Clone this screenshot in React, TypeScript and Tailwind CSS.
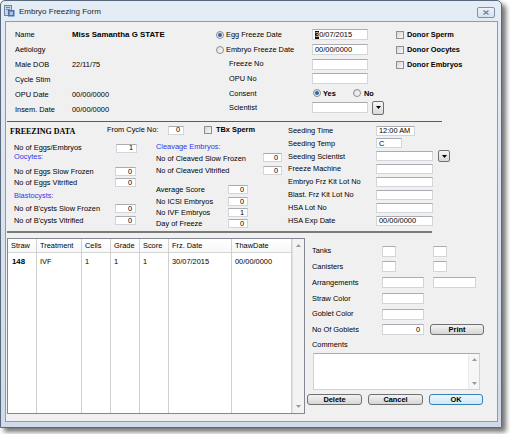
import React from "react";

type BoxProps = { className?: string; children?: React.ReactNode; right?: boolean };
function Box({ className = "", children, right = false }: BoxProps) {
  return (
    <div
      className={`bg-white border border-[#d3d5d9] border-t-[#a9acb2] flex items-center shrink-0 overflow-hidden whitespace-nowrap ${
        right ? "justify-end pr-[3px]" : "pl-[2px]"
      } ${className}`}
    >
      {children}
    </div>
  );
}

function Radio({ on = false, className = "" }: { on?: boolean; className?: string }) {
  return (
    <div
      className={`w-[8px] h-[8px] rounded-full border border-[#8c8c8c] bg-gradient-to-br from-[#dedede] to-[#fbfbfb] flex items-center justify-center shrink-0 ${className}`}
    >
      {on && <div className="w-[4px] h-[4px] rounded-full bg-[#2c66b8]" />}
    </div>
  );
}

function Check({ className = "" }: { className?: string }) {
  return (
    <div
      className={`w-[8px] h-[8px] border border-[#8e8f8f] bg-gradient-to-br from-[#d6d6d6] to-[#f8f8f8] shrink-0 ${className}`}
    />
  );
}

function DropBtn({ className = "" }: { className?: string }) {
  return (
    <div
      className={`w-[12px] rounded-[2px] border border-[#707070] bg-gradient-to-b from-[#f6f6f6] to-[#d9d9d9] flex items-center justify-center shrink-0 ${className}`}
    >
      <svg width="5" height="3" viewBox="0 0 5 3">
        <polygon points="0,0 5,0 2.5,3" fill="#000" />
      </svg>
    </div>
  );
}

function Btn({ children, className = "", def = false }: { children: React.ReactNode; className?: string; def?: boolean }) {
  return (
    <div
      className={`rounded-[3px] border flex items-center justify-center font-bold shrink-0 ${
        def
          ? "border-[#3c7fb1] bg-gradient-to-b from-[#eaf6fd] to-[#cfe8f7]"
          : "border-[#707070] bg-gradient-to-b from-[#f3f3f3] to-[#d6d6d6]"
      } ${className}`}
    >
      {children}
    </div>
  );
}

function Arrow({ up }: { up?: boolean }) {
  return (
    <svg width="5" height="3" viewBox="0 0 5 3">
      <polygon points={up ? "0,3 5,3 2.5,0" : "0,0 5,0 2.5,3"} fill="#9a9a9a" />
    </svg>
  );
}

const cols = [
  { h: "Straw", w: "w-[29px]", v: "148", b: true },
  { h: "Treatment", w: "w-[45px]", v: "IVF" },
  { h: "Cells", w: "w-[29px]", v: "1" },
  { h: "Grade", w: "w-[29px]", v: "1" },
  { h: "Score", w: "w-[29px]", v: "1" },
  { h: "Frz. Date", w: "w-[63px]", v: "30/07/2015" },
  { h: "ThawDate", w: "w-[60px]", v: "00/00/0000" },
];

export default function App() {
  return (
    <div className="w-[510px] h-[434px] bg-white font-['Liberation_Sans',Arial,sans-serif] text-[7.4px] leading-none text-black overflow-hidden">
      <div className="w-[502px] h-[428px] rounded-t-[5px] border border-[#59687a] bg-gradient-to-b from-[#e4ecf6] to-[#cfdbea] shadow-[4px_4px_5px_rgba(0,0,0,0.55)] flex flex-col">
        {/* title bar */}
        <div className="h-[20px] flex items-center shrink-0 relative">
          <svg className="ml-[3px]" width="11" height="12" viewBox="0 0 11 12">
            <rect x="0.5" y="0.5" width="7" height="10" fill="#c9d4e2" stroke="#6f83a0" />
            <rect x="2" y="2" width="4" height="1" fill="#6f83a0" />
            <rect x="2" y="4" width="4" height="1" fill="#6f83a0" />
            <rect x="4" y="5" width="6.5" height="6.5" fill="#4a6fa5" />
            <rect x="5.5" y="6.5" width="3.5" height="3.5" fill="#a9c1e0" />
          </svg>
          <span className="ml-[4px] text-[8px] text-[#22272e] mt-[1px]">Embryo Freezing Form</span>
          <div className="ml-auto mr-[6px] mt-[2px] w-[18px] h-[11px] rounded-[2px] border border-[#7f91a8] bg-gradient-to-b from-[#eef3f9] to-[#d6e0ec] flex items-center justify-center">
            <svg width="6" height="5" viewBox="0 0 6 5">
              <path d="M0.5 0.5 L5.5 4.5 M5.5 0.5 L0.5 4.5" stroke="#6b7a8e" strokeWidth="1.2" />
            </svg>
          </div>
        </div>

        {/* client */}
        <div className="ml-[4px] w-[493px] h-[401px] border border-[#8d9cb1] bg-[#f0f0f0] flex flex-col">
          {/* top section */}
          <div className="h-[99px] flex pl-[9px] shrink-0">
            <div className="w-[201px] pt-[5px] flex flex-col">
              <div className="h-[15px] flex items-center">
                <span className="w-[57px]">Name</span>
                <span className="font-bold text-[7.9px]">Miss Samantha G STATE</span>
              </div>
              <div className="h-[15px] flex items-center">
                <span className="w-[57px]">Aetiology</span>
              </div>
              <div className="h-[15px] flex items-center">
                <span className="w-[57px]">Male DOB</span>
                <span>22/11/75</span>
              </div>
              <div className="h-[15px] flex items-center">
                <span className="w-[57px]">Cycle Stim</span>
              </div>
              <div className="h-[15px] flex items-center">
                <span className="w-[57px]">OPU Date</span>
                <span>00/00/0000</span>
              </div>
              <div className="h-[15px] flex items-center">
                <span className="w-[57px]">Insem. Date</span>
                <span>00/00/0000</span>
              </div>
            </div>

            <div className="w-[180px] pt-[5.7px] flex flex-col">
              <div className="h-[14.6px] flex items-center">
                <div className="w-[96px] flex items-center">
                  <Radio on />
                  <span className="ml-[2px]">Egg Freeze Date</span>
                </div>
                <Box className="w-[56px] h-[11px]">
                  <span className="bg-[#111] text-white">3</span>0/07/2015
                </Box>
              </div>
              <div className="h-[14.6px] flex items-center">
                <div className="w-[96px] flex items-center">
                  <Radio />
                  <span className="ml-[2px]">Embryo Freeze Date</span>
                </div>
                <Box className="w-[56px] h-[11px]">00/00/0000</Box>
              </div>
              <div className="h-[14.6px] flex items-center">
                <span className="w-[96px] pl-[13px]">Freeze No</span>
                <Box className="w-[56px] h-[11px]" />
              </div>
              <div className="h-[14.6px] flex items-center">
                <span className="w-[96px] pl-[13px]">OPU No</span>
                <Box className="w-[56px] h-[11px]" />
              </div>
              <div className="h-[14.6px] flex items-center">
                <span className="w-[96px] pl-[13px]">Consent</span>
                <Radio on className="ml-[1px]" />
                <span className="ml-[2px] w-[30px] font-bold">Yes</span>
                <Radio />
                <span className="ml-[3px] font-bold">No</span>
              </div>
              <div className="h-[14.6px] flex items-center">
                <span className="w-[96px] pl-[13px]">Scientist</span>
                <Box className="w-[56px] h-[11px]" />
                <DropBtn className="ml-[4px] h-[14px]" />
              </div>
            </div>

            <div className="pt-[5.5px] flex flex-col">
              <div className="h-[15px] flex items-center">
                <Check />
                <span className="ml-[3px] font-bold">Donor Sperm</span>
              </div>
              <div className="h-[15px] flex items-center">
                <Check />
                <span className="ml-[3px] font-bold">Donor Oocytes</span>
              </div>
              <div className="h-[15px] flex items-center">
                <Check />
                <span className="ml-[3px] font-bold">Donor Embryos</span>
              </div>
            </div>
          </div>

          <div className="h-[1px] ml-[1px] w-[435px] bg-[#5e5e5e] shrink-0" />

          {/* freezing section */}
          <div className="h-[109px] flex shrink-0">
            <div className="w-[282px] pl-[4px] flex flex-col">
              <div className="mt-[1px] h-[14px] flex items-center">
                <span className="w-[97px] font-['Liberation_Serif',serif] font-bold text-[8px] mt-[3px]">FREEZING DATA</span>
                <span className="w-[61px]">From Cycle No:</span>
                <Box right className="w-[16px] h-[9px]">0</Box>
                <Check className="ml-[20px]" />
                <span className="ml-[4px] font-bold">TBx Sperm</span>
              </div>
              <div className="flex">
                <div className="w-[146px] pl-[4px] flex flex-col">
                  <div className="mt-[6.5px] h-[9px] flex items-center">
                    <span className="w-[102px]">No of Eggs/Embryos</span>
                    <Box right className="w-[21px] h-[9px]">1</Box>
                  </div>
                  <div className="h-[9px] flex items-center text-[#3434e8]">Oocytes:</div>
                  <div className="mt-[5.5px] h-[9px] flex items-center">
                    <span className="w-[101px]">No of Eggs Slow Frozen</span>
                    <Box right className="w-[21px] h-[9px]">0</Box>
                  </div>
                  <div className="mt-[2px] h-[9px] flex items-center">
                    <span className="w-[101px]">No of Eggs Vitrified</span>
                    <Box right className="w-[21px] h-[9px]">0</Box>
                  </div>
                  <div className="mt-[4.5px] h-[9px] flex items-center text-[#3434e8]">Blastocysts:</div>
                  <div className="mt-[3.5px] h-[9px] flex items-center">
                    <span className="w-[101px]">No of B'cysts Slow Frozen</span>
                    <Box right className="w-[21px] h-[9px]">0</Box>
                  </div>
                  <div className="mt-[3px] h-[9px] flex items-center">
                    <span className="w-[101px]">No of B'cysts Vitrified</span>
                    <Box right className="w-[21px] h-[9px]">0</Box>
                  </div>
                </div>
                <div className="flex flex-col">
                  <div className="mt-[5.5px] h-[9px] flex items-center text-[#3434e8]">Cleavage Embryos:</div>
                  <div className="mt-[1.5px] h-[9px] flex items-center">
                    <span className="w-[107px] mt-[2px]">No of Cleaved Slow Frozen</span>
                    <Box right className="w-[19px] h-[9px]">0</Box>
                  </div>
                  <div className="mt-[4px] h-[9px] flex items-center">
                    <span className="w-[107px] mt-[1px]">No of Cleaved Vitrified</span>
                    <Box right className="w-[19px] h-[9px]">0</Box>
                  </div>
                  <div className="mt-[10px] h-[9px] flex items-center">
                    <span className="w-[72px]">Average Score</span>
                    <Box right className="w-[20px] h-[9px]">0</Box>
                  </div>
                  <div className="mt-[3px] h-[9px] flex items-center">
                    <span className="w-[72px]">No ICSI Embryos</span>
                    <Box right className="w-[20px] h-[9px]">0</Box>
                  </div>
                  <div className="mt-[2px] h-[9px] flex items-center">
                    <span className="w-[72px]">No IVF Embryos</span>
                    <Box right className="w-[20px] h-[9px]">1</Box>
                  </div>
                  <div className="mt-[2px] h-[9px] flex items-center">
                    <span className="w-[72px]">Day of Freeze</span>
                    <Box right className="w-[20px] h-[9px]">0</Box>
                  </div>
                </div>
              </div>
            </div>

            <div className="pt-[4px] flex flex-col gap-[3.9px]">
              <div className="h-[9px] flex items-center">
                <span className="w-[88px]">Seeding Time</span>
                <Box className="w-[39px] h-[10px]">12:00 AM</Box>
              </div>
              <div className="h-[9px] flex items-center">
                <span className="w-[88px]">Seeding Temp</span>
                <Box className="w-[26px] h-[10px]">C</Box>
              </div>
              <div className="h-[9px] flex items-center">
                <span className="w-[88px]">Seeding Scientist</span>
                <Box className="w-[57px] h-[10px]" />
                <DropBtn className="ml-[5px] h-[12px]" />
              </div>
              <div className="h-[9px] flex items-center">
                <span className="w-[88px]">Freeze Machine</span>
                <Box className="w-[57px] h-[10px]" />
              </div>
              <div className="h-[9px] flex items-center">
                <span className="w-[88px]">Embryo Frz Kit Lot No</span>
                <Box className="w-[57px] h-[10px]" />
              </div>
              <div className="h-[9px] flex items-center">
                <span className="w-[88px]">Blast. Frz Kit Lot No</span>
                <Box className="w-[57px] h-[10px]" />
              </div>
              <div className="h-[9px] flex items-center">
                <span className="w-[88px]">HSA Lot No</span>
                <Box className="w-[57px] h-[10px]" />
              </div>
              <div className="h-[9px] flex items-center">
                <span className="w-[88px]">HSA Exp Date</span>
                <Box className="w-[57px] h-[10px]">00/00/0000</Box>
              </div>
            </div>
          </div>

          <div className="h-[2px] ml-[1px] w-[425px] bg-[#7a7a7a] shrink-0" />

          {/* bottom section */}
          <div className="flex flex-1">
            <div className="ml-[1px] mt-[5px] w-[298px] h-[176px] border border-[#828790] bg-white flex">
              <div className="flex">
                {cols.map((c) => (
                  <div key={c.h} className={`${c.w} flex flex-col border-r border-[#d0d0d0]`}>
                    <div className="h-[14px] border-b border-[#d5d5d5] flex items-center pl-[3px] bg-gradient-to-b from-white to-[#f7f8fa]">
                      {c.h}
                    </div>
                    <div className={`pl-[3px] pt-[5px] ${c.b ? "font-bold text-[7.8px] pl-[4px]" : ""}`}>{c.v}</div>
                  </div>
                ))}
              </div>
              <div className="w-[12px] bg-[#f3f3f3] border-l border-[#e2e2e2] flex flex-col justify-between items-center pt-[5px] pb-[5px]">
                <Arrow up />
                <Arrow />
              </div>
            </div>

            <div className="pl-[7px] flex flex-col">
              <div className="mt-[12.5px] h-[11px] flex items-center">
                <span className="w-[70px]">Tanks</span>
                <Box className="w-[14px] h-[11px]" />
                <Box className="ml-[37px] w-[14px] h-[11px]" />
              </div>
              <div className="mt-[4.8px] h-[11px] flex items-center">
                <span className="w-[70px]">Canisters</span>
                <Box className="w-[14px] h-[11px]" />
                <Box className="ml-[37px] w-[14px] h-[11px]" />
              </div>
              <div className="mt-[4.8px] h-[11px] flex items-center">
                <span className="w-[70px]">Arrangements</span>
                <Box className="w-[42px] h-[11px]" />
                <Box className="ml-[9px] w-[43px] h-[11px]" />
              </div>
              <div className="mt-[4.8px] h-[11px] flex items-center">
                <span className="w-[70px]">Straw Color</span>
                <Box className="w-[42px] h-[11px]" />
              </div>
              <div className="mt-[4.8px] h-[11px] flex items-center">
                <span className="w-[70px]">Goblet Color</span>
                <Box className="w-[42px] h-[11px]" />
              </div>
              <div className="mt-[4.8px] h-[11px] flex items-center">
                <span className="w-[70px]">No Of Goblets</span>
                <Box right className="w-[42px] h-[11px]">0</Box>
                <Btn className="ml-[6px] w-[54px] h-[11px]">Print</Btn>
              </div>
              <div className="mt-[5px] h-[9px] flex items-center">Comments</div>
              <div className="mt-[3.5px] ml-[1px] w-[167px] h-[37px] border border-[#cfd2d6] border-t-[#abadb3] bg-white flex justify-end">
                <div className="w-[11px] bg-[#f6f6f6] border-l border-[#ececec] flex flex-col justify-between items-center py-[4px]">
                  <Arrow up />
                  <Arrow />
                </div>
              </div>
              <div className="mt-[4.5px] ml-[-5px] flex gap-[6px]">
                <Btn className="w-[55px] h-[11px]">Delete</Btn>
                <Btn className="w-[55px] h-[11px]">Cancel</Btn>
                <Btn def className="w-[54px] h-[11px]">OK</Btn>
              </div>
            </div>
          </div>
        </div>
      </div>
    </div>
  );
}
